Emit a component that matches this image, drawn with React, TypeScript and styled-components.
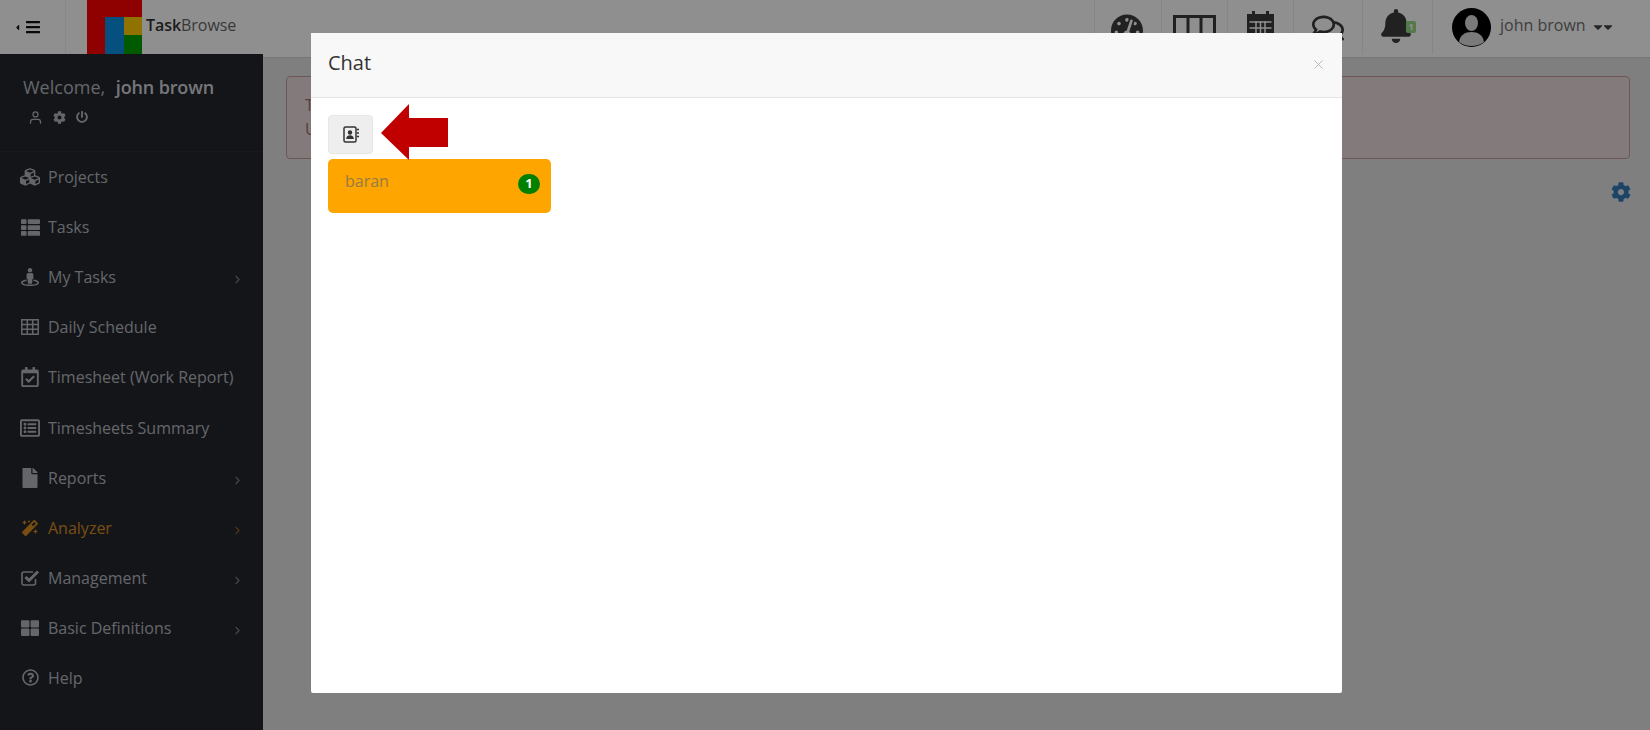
import React, { FC, ReactElement, ReactNode } from "react";
import styled, { createGlobalStyle } from "styled-components";
import {
  FaBars,
  FaBell,
  FaCaretDown,
  FaCaretLeft,
  FaCog,
  FaCubes,
  FaFile,
  FaMagic,
  FaPowerOff,
  FaRegCalendarCheck,
  FaRegComments,
  FaRegListAlt,
  FaRegQuestionCircle,
  FaStreetView,
  FaTachometerAlt,
  FaThLarge,
  FaThList,
} from "react-icons/fa";
import { FiChevronRight, FiUser, FiX } from "react-icons/fi";

interface iMenuItem {
  label: string;
  icon: ReactNode;
  arrow?: boolean;
  active?: boolean;
}

const GridIcon = () => (
  <svg width="18" height="16" viewBox="0 0 18 16">
    <path
      d="M.8.8h16.400v14.400H.8zM.8 5.500h16.400M.8 10.300h16.400M6.300 1v14M11.700 1v14"
      fill="none"
      stroke="currentColor"
      strokeWidth="1.500"
    />
  </svg>
);

const CheckBoxIcon = () => (
  <svg width="19" height="16" viewBox="0 0 19 16">
    <path
      d="M14.500 9v4a2 2 0 0 1-2 2H3a2 2 0 0 1-2-2V4a2 2 0 0 1 2-2h9"
      fill="none"
      stroke="currentColor"
      strokeWidth="1.600"
    />
    <path d="M4.500 7 8 10.500 17 1.500" fill="none" stroke="currentColor" strokeWidth="3" />
  </svg>
);

const menu: iMenuItem[] = [
  { label: "Projects", icon: <FaCubes size={24} /> },
  { label: "Tasks", icon: <FaThList size={19} /> },
  { label: "My Tasks", icon: <FaStreetView size={18} />, arrow: true },
  { label: "Daily Schedule", icon: <GridIcon /> },
  { label: "Timesheet (Work Report)", icon: <FaRegCalendarCheck size={20} /> },
  { label: "Timesheets Summary", icon: <FaRegListAlt size={20} /> },
  { label: "Reports", icon: <FaFile size={20} />, arrow: true },
  { label: "Analyzer", icon: <FaMagic size={16} />, arrow: true, active: true },
  { label: "Management", icon: <CheckBoxIcon />, arrow: true },
  { label: "Basic Definitions", icon: <FaThLarge size={18} />, arrow: true },
  { label: "Help", icon: <FaRegQuestionCircle size={17} /> },
];

const App: FC = (): ReactElement => {
  return (
    <Page>
      <GlobalStyle />
      <Header>
        <Toggle>
          <FaCaretLeft size={9} />
          <FaBars size={16} />
        </Toggle>
        <Logo>
          <svg width="55" height="54" viewBox="0 0 55 54">
            <rect width="55" height="54" fill="#ff0000" />
            <rect x="18" y="17" width="19" height="37" fill="#0a8fe0" />
            <rect x="37" y="17" width="18" height="18" fill="#ffcc00" />
            <rect x="37" y="35" width="18" height="19" fill="#00a000" />
          </svg>
          <Brand>
            <b>Task</b>Browse
          </Brand>
        </Logo>
        <HeaderTools>
          <Tool $w={67} $top={11} $shift={2}>
            <FaTachometerAlt size={32} />
          </Tool>
          <Tool $w={66} $top={14}>
            <svg width="43" height="32" viewBox="0 0 43 32">
              <path
                d="M1.500 2.500h40v28h-40zM15 2.500v28M28 2.500v28"
                fill="none"
                stroke="currentColor"
                strokeWidth="3"
              />
            </svg>
          </Tool>
          <Tool $w={66} $top={9}>
            <svg width="29" height="32" viewBox="0 0 29 32">
              <path d="M1 5h5V2h3v3h11V2h3v3h5v26H1z" fill="currentColor" />
              <path
                d="M3.500 13h22M3.500 19h22M3.500 25h22M10 12v17M14.500 12v17M19 12v17"
                stroke="#fff"
                strokeWidth="1.500"
              />
            </svg>
          </Tool>
          <Tool $w={69} $top={12}>
            <FaRegComments size={32} />
          </Tool>
          <Tool $w={70} $top={9} $shift={4}>
            <FaBell size={34} />
            <Count>1</Count>
          </Tool>
          <UserBox>
            <svg width="39" height="39" viewBox="0 0 39 39">
              <circle cx="19.500" cy="19.500" r="19.500" fill="#000" />
              <ellipse cx="19.500" cy="15" rx="6.500" ry="8" fill="#d9d9d9" />
              <path
                d="M7 34c1-7 6-10 12.500-10S31 27 32 34c-3.500 2.600-8 4-12.500 4S10.500 36.600 7 34z"
                fill="#d9d9d9"
              />
            </svg>
            <UserName>john brown</UserName>
            <Carets>
              <FaCaretDown size={14} />
              <FaCaretDown size={14} />
            </Carets>
          </UserBox>
        </HeaderTools>
      </Header>
      <Body>
        <Sidebar>
          <Profile>
            <Welcome>
              Welcome, <b>john brown</b>
            </Welcome>
            <ProfileIcons>
              <FiUser size={15} />
              <FaCog size={13} />
              <FaPowerOff size={12} />
            </ProfileIcons>
          </Profile>
          <Menu>
            {menu.map((m) => (
              <MenuRow key={m.label} $active={m.active}>
                <MenuIcon>{m.icon}</MenuIcon>
                <span>{m.label}</span>
                {m.arrow && (
                  <Arrow>
                    <FiChevronRight size={13} />
                  </Arrow>
                )}
              </MenuRow>
            ))}
          </Menu>
        </Sidebar>
        <Main>
          <HeaderEdge />
          <Content>
            <Alert>
              <p>T</p>
              <p>U</p>
            </Alert>
            <GearRow>
              <FaCog size={20} />
            </GearRow>
          </Content>
        </Main>
      </Body>
      <Overlay />
      <Modal>
        <ModalHeader>
          <h4>Chat</h4>
          <Close>
            <FiX size={15} strokeWidth={1.5} />
          </Close>
        </ModalHeader>
        <ModalBody>
          <ContactsButton>
            <svg width="16" height="17" viewBox="0 0 16 17">
              <rect x="1" y="1" width="12" height="15" rx="1.500" fill="none" stroke="currentColor" strokeWidth="1.500" />
              <circle cx="7" cy="6.500" r="2.200" fill="currentColor" />
              <path d="M3.200 13c0-2.500 1.600-3.700 3.800-3.700s3.800 1.200 3.800 3.700z" fill="currentColor" />
              <path d="M14 3.500h2M14 7h2M14 10.500h2" stroke="currentColor" strokeWidth="1.500" />
            </svg>
          </ContactsButton>
          <RedArrow width="67" height="56" viewBox="0 0 67 56">
            <path d="M0 29 28 0v14h39v29H28v13z" fill="#c00000" />
          </RedArrow>
          <ChatCard>
            <span>baran</span>
            <Badge>1</Badge>
          </ChatCard>
        </ModalBody>
      </Modal>
    </Page>
  );
};

export default App;

const GlobalStyle = createGlobalStyle`
  html, body {
    margin: 0;
    height: 100%;
    overflow: hidden;
  }
  * {
    box-sizing: border-box;
  }
  body {
    font-family: "Open Sans", "Noto Sans", sans-serif;
  }
`;

const Page = styled.div`
  position: relative;
  display: flex;
  flex-direction: column;
  width: 1650px;
  height: 730px;
  overflow: hidden;
  background: #e3e3e3;
`;

const Header = styled.div`
  display: flex;
  align-items: stretch;
  height: 54px;
  background: #fff;
  color: #222;
`;

const Toggle = styled.div`
  display: flex;
  align-items: center;
  gap: 3px;
  width: 66px;
  padding-left: 13px;
  border-right: 1px solid #f0f0f0;
  color: #111;
`;

const Logo = styled.div`
  display: flex;
  align-items: center;
  gap: 4px;
  margin-left: 21px;
`;

const Brand = styled.span`
  margin-top: -4px;
  font-size: 16px;
  letter-spacing: -0.05px;
  color: #666;

  b {
    font-weight: 600;
    color: #333;
  }
`;

const HeaderTools = styled.div`
  display: flex;
  margin-left: auto;
`;

const Tool = styled.div<{ $w: number; $top: number; $shift?: number }>`
  position: relative;
  display: flex;
  align-items: flex-start;
  justify-content: center;
  width: ${(p) => p.$w}px;
  padding-top: ${(p) => p.$top}px;
  padding-right: ${(p) => p.$shift ?? 0}px;
  border-left: 1px solid #eee;
  color: #3c3c3c;
`;

const Count = styled.span`
  position: absolute;
  top: 21px;
  right: 16px;
  width: 10px;
  background: #96d884;
  color: #fff;
  border-radius: 2px;
  font-size: 9px;
  font-weight: 700;
  line-height: 12px;
  text-align: center;
`;

const UserBox = styled.div`
  display: flex;
  align-items: center;
  width: 218px;
  padding-left: 19px;
  border-left: 1px solid #eee;
`;

const UserName = styled.span`
  margin: -4px 0 0 9px;
  font-size: 16px;
  color: #707070;
`;

const Carets = styled.span`
  display: flex;
  margin-left: 5px;
  color: #444;

  svg + svg {
    margin-left: -4px;
  }
`;

const Body = styled.div`
  display: flex;
  flex: 1;
  min-height: 0;
`;

const Sidebar = styled.div`
  display: flex;
  flex-direction: column;
  width: 263px;
  background: #24272e;
  color: #b4b7be;
`;

const Profile = styled.div`
  height: 98px;
  padding: 20px 23px 0;
  border-bottom: 1px solid #2a2d35;
`;

const Welcome = styled.div`
  font-size: 18px;
  line-height: 27px;
  white-space: pre-wrap;

  b {
    margin-left: 6px;
    font-weight: 600;
    letter-spacing: -0.15px;
    color: #d2d4da;
  }
`;

const ProfileIcons = styled.div`
  display: flex;
  align-items: center;
  gap: 10px;
  margin: 6px 0 0 5px;
  height: 20px;
`;

const Menu = styled.div`
  display: flex;
  flex-direction: column;
`;

const MenuRow = styled.div<{ $active?: boolean }>`
  display: flex;
  align-items: center;
  height: 50.1px;
  padding: 0 21px 0 20px;
  font-size: 16px;
  color: ${(p) => (p.$active ? "#d98a1e" : "#b4b7be")};
`;

const MenuIcon = styled.span`
  display: flex;
  justify-content: center;
  width: 20px;
  margin-right: 8px;
`;

const Arrow = styled.span`
  display: flex;
  margin: 5px -2px 0 auto;
  opacity: 0.6;
`;

const Main = styled.div`
  display: flex;
  flex-direction: column;
  flex: 1;
  min-width: 0;
`;

const HeaderEdge = styled.div`
  height: 4px;
  background: #fff;
  border-bottom: 1px solid #d0d0d0;
`;

const Content = styled.div`
  padding: 18px 20px 0 23px;
`;

const Alert = styled.div`
  height: 83px;
  padding: 16px 18px;
  background: #e9dcdc;
  border: 1px solid #c59a9a;
  border-radius: 4px;
  color: #9a7070;
  font-size: 16px;
  line-height: 24px;

  p {
    margin: 0;
  }
`;

const GearRow = styled.div`
  display: flex;
  justify-content: flex-end;
  margin-right: -1px;
  padding: 23px 0 0;
  color: #337ab7;
`;

const Overlay = styled.div`
  position: absolute;
  inset: 0;
  background: rgba(0, 0, 0, 0.44);
`;

const Modal = styled.div`
  position: absolute;
  top: 33px;
  left: 311px;
  width: 1031px;
  height: 660px;
  background: #fff;
  border-radius: 2px;
`;

const ModalHeader = styled.div`
  display: flex;
  align-items: center;
  justify-content: space-between;
  height: 65px;
  padding: 0 17px;
  background: #f8f8f8;
  border-bottom: 1px solid #e5e5e5;

  h4 {
    margin: -5px 0 0;
    font-size: 20px;
    font-weight: 500;
    color: #333;
  }
`;

const Close = styled.span`
  display: flex;
  margin: -2px -1px 0 0;
  color: #b5b5b5;
`;

const ModalBody = styled.div`
  position: relative;
  padding: 17px;
`;

const ContactsButton = styled.button`
  display: flex;
  align-items: center;
  justify-content: center;
  width: 45px;
  height: 39px;
  padding: 0;
  background: #eee;
  border: 1px solid #e6e6e6;
  border-radius: 4px;
  color: #333;
`;

const RedArrow = styled.svg`
  position: absolute;
  top: 6px;
  left: 70px;
`;

const ChatCard = styled.div`
  display: flex;
  justify-content: space-between;
  width: 223px;
  height: 54px;
  margin-top: 5px;
  padding: 11px 11px 0 17px;
  background: #ffa500;
  border-radius: 5px;
  color: #957c47;
  font-size: 16px;
  line-height: 22px;
`;

const Badge = styled.span`
  width: 22px;
  height: 20px;
  margin-top: 4px;
  background: #008000;
  border-radius: 10px;
  color: #fff;
  font-size: 13px;
  font-weight: 700;
  line-height: 18px;
  text-align: center;
`;
